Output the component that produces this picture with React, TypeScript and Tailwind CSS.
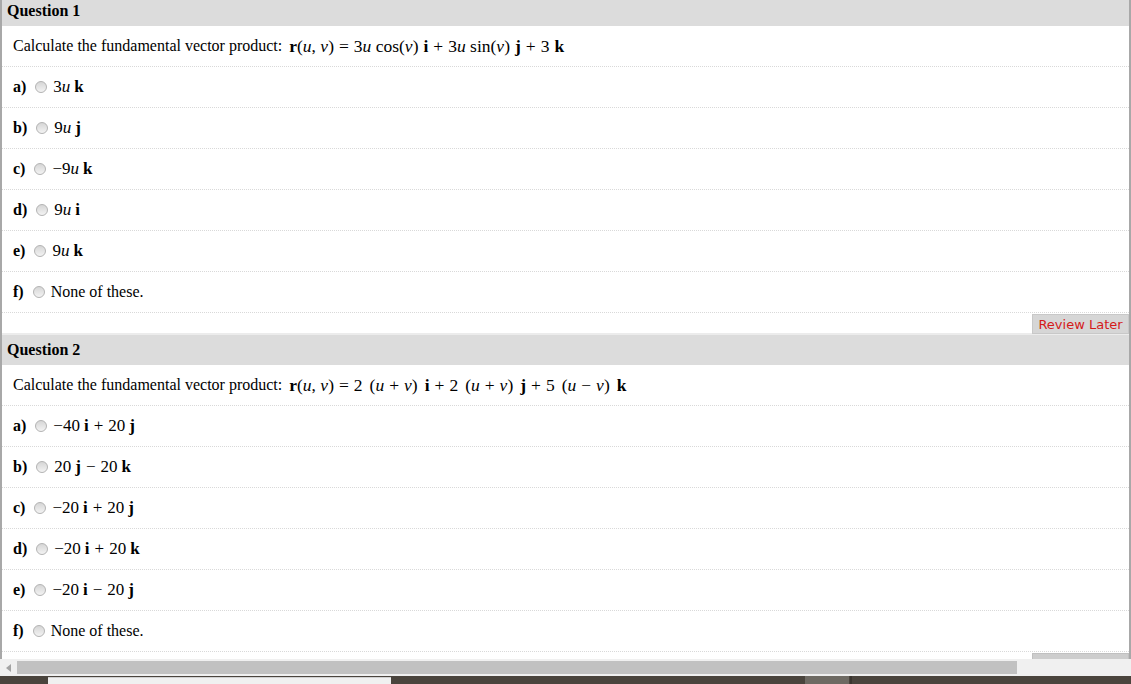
import React from "react";

const serif = "font-['Liberation_Serif','Times_New_Roman',serif]";

const I = ({ children }: { children: React.ReactNode }) => <span className="italic">{children}</span>;
const B = ({ children }: { children: React.ReactNode }) => <span className="font-bold">{children}</span>;
const Op = ({ children }: { children: React.ReactNode }) => <span className="mx-[5px]">{children}</span>;
const Sp = () => <span className="inline-block w-[4px]" />;
const Sq = () => <span className="inline-block w-[5px]" />;
const Sw = () => <span className="inline-block w-[7px]" />;

function Radio() {
  return (
    <span className="inline-block w-[12px] h-[12px] rounded-full border border-[#b3b3b3] bg-gradient-to-b from-[#d6d6d6] to-[#f3f3f3] shrink-0" />
  );
}

function Row({ children, className = "" }: { children: React.ReactNode; className?: string }) {
  return (
    <div className={`h-[41px] flex items-center border-b border-dotted border-[#d9d9d9] ${className}`}>{children}</div>
  );
}

function Answer({ label, children }: { label: string; children: React.ReactNode }) {
  return (
    <Row className="pl-[11px]">
      <span className="font-bold text-[16px]">{label}</span>
      <span className="ml-[9px] flex items-center">
        <Radio />
      </span>
      <span className="ml-[6px] text-[16px]">{children}</span>
    </Row>
  );
}

function Header({ n }: { n: number }) {
  return (
    <div className="h-[30px] bg-[#dcdcdc] flex items-center pl-[5px] font-bold text-[16px]">Question {n}</div>
  );
}

function ReviewRow() {
  return (
    <div className="h-[22px] flex justify-end items-start pt-[1px] border-b-2 border-[#ececec]">
      <button className="h-[20px] w-[97px] bg-[#d6d6d6] border border-[#c8c8c8] text-[#d41a1a] text-[13px] font-['DejaVu_Sans',sans-serif] leading-none flex items-center justify-center">
        Review Later
      </button>
    </div>
  );
}

export default function App() {
  return (
    <div className={`w-[1131px] h-[684px] overflow-hidden bg-white flex flex-col text-black ${serif}`}>
      <div className="h-[659px] overflow-hidden border-l-2 border-r-2 border-[#a8a8a8]">
        <div className="-mt-[4px]">
          <Header n={1} />
          <Row className="pl-[11px] text-[16px]">
            <span>Calculate the fundamental vector product:</span>
            <span className="ml-[7px] text-[17.5px]">
              <B>r</B>(<I>u</I>, <I>v</I>)<Op>=</Op>3<I>u</I> cos(<I>v</I>)<Sq /><B>i</B><Op>+</Op>3<I>u</I> sin(<I>v</I>)<Sq /><B>j</B><Op>+</Op>3<Sq /><B>k</B>
            </span>
          </Row>
          <Answer label="a)"><span className="text-[17px]">3<I>u</I><Sp /><B>k</B></span></Answer>
          <Answer label="b)"><span className="text-[17px]">9<I>u</I><Sp /><B>j</B></span></Answer>
          <Answer label="c)"><span className="text-[17px]">−9<I>u</I><Sp /><B>k</B></span></Answer>
          <Answer label="d)"><span className="text-[17px]">9<I>u</I><Sp /><B>i</B></span></Answer>
          <Answer label="e)"><span className="text-[17px]">9<I>u</I><Sp /><B>k</B></span></Answer>
          <Answer label="f)">None of these.</Answer>
          <ReviewRow />
          <Header n={2} />
          <Row className="pl-[11px] text-[16px]">
            <span>Calculate the fundamental vector product:</span>
            <span className="ml-[7px] text-[17.5px]">
              <B>r</B>(<I>u</I>, <I>v</I>)<Op>=</Op>2<Sw />(<I>u</I><Op>+</Op><I>v</I>)<Sw /><B>i</B><Op>+</Op>2<Sw />(<I>u</I><Op>+</Op><I>v</I>)<Sw /><B>j</B><Op>+</Op>5<Sw />(<I>u</I><Op>−</Op><I>v</I>)<Sw /><B>k</B>
            </span>
          </Row>
          <Answer label="a)"><span className="text-[17px]">−40<Sp /><B>i</B><Op>+</Op>20<Sp /><B>j</B></span></Answer>
          <Answer label="b)"><span className="text-[17px]">20<Sp /><B>j</B><Op>−</Op>20<Sp /><B>k</B></span></Answer>
          <Answer label="c)"><span className="text-[17px]">−20<Sp /><B>i</B><Op>+</Op>20<Sp /><B>j</B></span></Answer>
          <Answer label="d)"><span className="text-[17px]">−20<Sp /><B>i</B><Op>+</Op>20<Sp /><B>k</B></span></Answer>
          <Answer label="e)"><span className="text-[17px]">−20<Sp /><B>i</B><Op>−</Op>20<Sp /><B>j</B></span></Answer>
          <Answer label="f)">None of these.</Answer>
          <div className="h-[22px] flex justify-end items-start pt-[1px]">
            <div className="h-[20px] w-[97px] bg-[#cdcdcd] border border-[#c0c0c0]" />
          </div>
        </div>
      </div>
      {/* horizontal scrollbar */}
      <div className="h-[17px] bg-[#f0f0f0] flex items-center">
        <div className="w-[17px] flex justify-center">
          <svg width="6" height="8" viewBox="0 0 6 8">
            <path d="M5 0 L0 4 L5 8 Z" fill="#a3a3a3" />
          </svg>
        </div>
        <div className="w-[1000px] h-[13px] bg-[#c1c1c1]" />
      </div>
      {/* taskbar */}
      <div className="h-[8px] bg-[#4a443d] flex">
        <div className="w-[48px]" />
        <div className="w-[343px] bg-[#f0f0f0] border-t border-[#d0d0d0] mt-[1px]" />
        <div className="w-[414px]" />
        <div className="w-[44px] bg-[#6e6a63]" />
        <div className="w-[2px] bg-[#3a352f] ml-[1px]" />
      </div>
    </div>
  );
}
